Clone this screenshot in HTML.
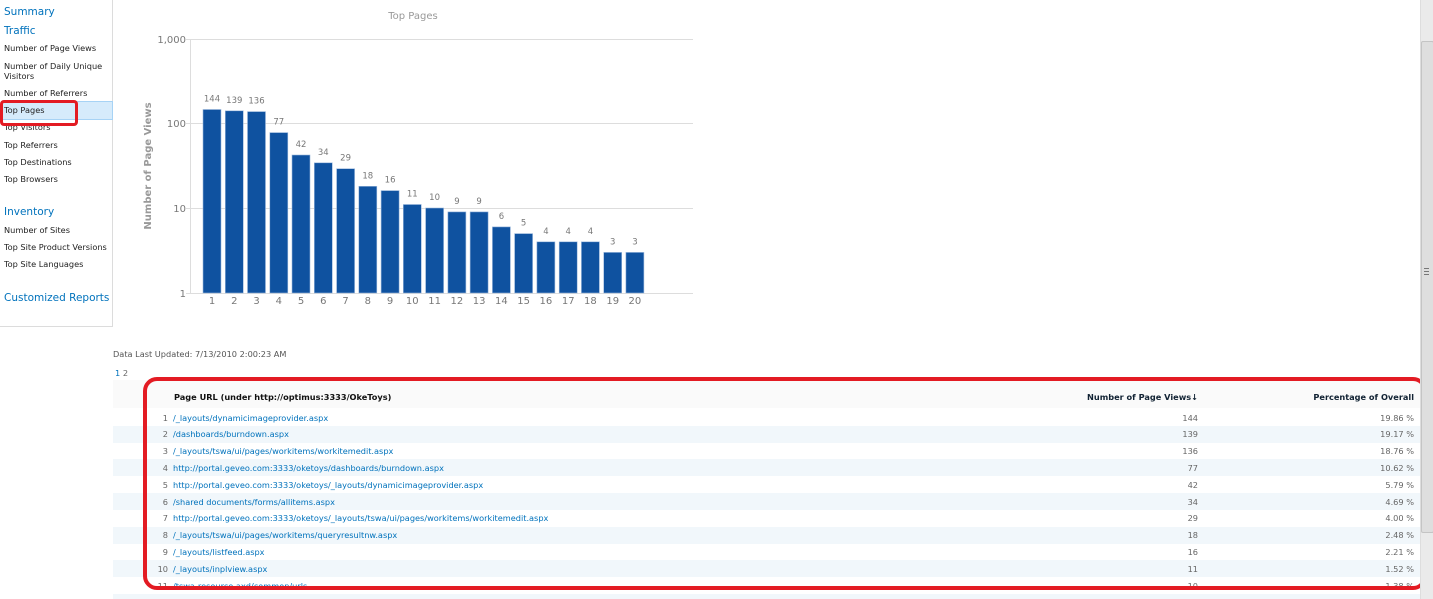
<!DOCTYPE html>
<html style="overflow:hidden"><head><meta charset="utf-8"><style>
body{margin:0;width:1433px;height:599px;overflow:hidden;background:#fff;font-family:"DejaVu Sans",Verdana,sans-serif;font-size:8.2px;color:#333;position:relative}
.a{position:absolute;white-space:nowrap}
.side{position:absolute;left:0;top:0;width:112px;height:326px;border-right:1px solid #dcdcdc;border-bottom:1px solid #dcdcdc}
.h{color:#0072bc;font-size:10.5px}
.l{color:#222;font-size:8.2px}
.row{position:absolute;left:113px;width:1307px;height:17px}
.alt{background:#f1f7fb}
.u{color:#0072bc}
.n{position:absolute;text-align:right;color:#666}
</style></head><body>
<div class="side"></div>
<div class="a" style="left:1px;top:101px;width:110px;height:17px;background:#d6ebfb;border:1px solid #a7d3f5"></div>
<div class="a h" style="left:4px;top:6px">Summary</div>
<div class="a h" style="left:4px;top:25px">Traffic</div>
<div class="a l" style="left:4px;top:43px">Number of Page Views</div>
<div class="a l" style="left:4px;top:61px;line-height:10px">Number of Daily Unique<br>Visitors</div>
<div class="a l" style="left:4px;top:88px">Number of Referrers</div>
<div class="a l" style="left:4px;top:105px">Top Pages</div>
<div class="a l" style="left:4px;top:122px">Top Visitors</div>
<div class="a l" style="left:4px;top:140px">Top Referrers</div>
<div class="a l" style="left:4px;top:157px">Top Destinations</div>
<div class="a l" style="left:4px;top:174px">Top Browsers</div>
<div class="a h" style="left:4px;top:206px">Inventory</div>
<div class="a l" style="left:4px;top:225px">Number of Sites</div>
<div class="a l" style="left:4px;top:242px">Top Site Product Versions</div>
<div class="a l" style="left:4px;top:259px">Top Site Languages</div>
<div class="a h" style="left:4px;top:292px">Customized Reports</div>
<div class="a" style="left:0;top:100px;width:72px;height:20px;border:3px solid #e31b23;border-radius:4px"></div>

<svg class="a" style="left:0;top:0" width="720" height="330" font-family="DejaVu Sans,sans-serif">
<text x="413" y="19" font-size="10" fill="#999" text-anchor="middle">Top Pages</text>
<g stroke="#ddd" stroke-width="1">
<line x1="186" y1="39.5" x2="693" y2="39.5"/><line x1="186" y1="123.5" x2="693" y2="123.5"/><line x1="186" y1="208.5" x2="693" y2="208.5"/><line x1="186" y1="293.5" x2="693" y2="293.5"/><line x1="190.5" y1="39" x2="190.5" y2="294"/>
</g>
<g font-size="10" fill="#777" text-anchor="end"><text x="186" y="43">1,000</text><text x="186" y="127">100</text><text x="186" y="212">10</text><text x="186" y="297">1</text></g>
<text transform="translate(151,166) rotate(-90)" font-size="10" font-weight="bold" fill="#999" text-anchor="middle">Number of Page Views</text>
<g id="bars"></g>
</svg>
<script>
var v=[144,139,136,77,42,34,29,18,16,11,10,9,9,6,5,4,4,4,3,3],s='',g=document.getElementById('bars');
for(var i=0;i<20;i++){var x=203+i*22.26,y=293-85*Math.log10(v[i]);
s+='<rect x="'+x.toFixed(1)+'" y="'+y.toFixed(1)+'" width="18" height="'+(293-y).toFixed(1)+'" fill="#0f52a0" stroke="#9bb8dc" stroke-width="0.6"/>';
s+='<text x="'+(x+9).toFixed(1)+'" y="'+(y-8).toFixed(1)+'" font-size="8.5" fill="#777" text-anchor="middle">'+v[i]+'</text>';
s+='<text x="'+(x+9).toFixed(1)+'" y="304" font-size="10" fill="#777" text-anchor="middle">'+(i+1)+'</text>';}
g.innerHTML=s;
</script>

<div class="a" style="left:113px;top:349px;color:#555">Data Last Updated: 7/13/2010 2:00:23 AM</div>
<div class="a" style="left:115px;top:368px"><span class="u">1</span> <span style="color:#666">2</span></div>
<div class="row" style="top:380px;height:28px;background:#fafafa"></div>
<div class="a" style="left:174px;top:392px;font-weight:bold;color:#111">Page URL (under http://optimus:3333/OkeToys)</div>
<div class="a" style="left:1000px;width:198px;top:392px;font-weight:bold;color:#123;text-align:right">Number of Page Views&#8595;</div>
<div class="a" style="left:1220px;width:194px;top:392px;font-weight:bold;color:#123;text-align:right">Percentage of Overall</div>
<div id="rows"></div>
<script>
var d=[["/_layouts/dynamicimageprovider.aspx",144,"19.86"],["/dashboards/burndown.aspx",139,"19.17"],["/_layouts/tswa/ui/pages/workitems/workitemedit.aspx",136,"18.76"],["http://portal.geveo.com:3333/oketoys/dashboards/burndown.aspx",77,"10.62"],["http://portal.geveo.com:3333/oketoys/_layouts/dynamicimageprovider.aspx",42,"5.79"],["/shared documents/forms/allitems.aspx",34,"4.69"],["http://portal.geveo.com:3333/oketoys/_layouts/tswa/ui/pages/workitems/workitemedit.aspx",29,"4.00"],["/_layouts/tswa/ui/pages/workitems/queryresultnw.aspx",18,"2.48"],["/_layouts/listfeed.aspx",16,"2.21"],["/_layouts/inplview.aspx",11,"1.52"],["/tswa-resource.axd/common/urls",10,"1.38"],["/shared documents/default.aspx",9,"1.24"]],h='';
for(var i=0;i<d.length;i++){var t=409+i*16.8;
h+='<div class="row'+(i%2?' alt':'')+'" style="top:'+t.toFixed(1)+'px"></div>';
h+='<div class="n" style="left:140px;width:28px;top:'+(t+3.5).toFixed(1)+'px">'+(i+1)+'</div>';
h+='<div class="a u" style="left:173px;top:'+(t+3.5).toFixed(1)+'px">'+d[i][0]+'</div>';
h+='<div class="n" style="left:1100px;width:98px;top:'+(t+3.5).toFixed(1)+'px">'+d[i][1]+'</div>';
h+='<div class="n" style="left:1300px;width:114px;top:'+(t+3.5).toFixed(1)+'px">'+d[i][2]+' %</div>';}
document.getElementById('rows').innerHTML=h;
</script>
<div class="a" style="left:143px;top:377px;width:1276px;height:205px;border:4px solid #e31b23;border-radius:14px"></div>

<div class="a" style="left:1420px;top:0;width:13px;height:599px;background:#eaeaea;border-left:1px solid #ddd"></div>
<div class="a" style="left:1421px;top:41px;width:11px;height:490px;background:#dedede;border:1px solid #c4c4c4;border-radius:2px"></div>
<div class="a" style="left:1424px;top:268px;width:5px;height:7px;border-top:1px solid #777;border-bottom:1px solid #777;box-sizing:border-box"></div>
<div class="a" style="left:1424px;top:271px;width:5px;height:1px;background:#777"></div>
</body></html>
